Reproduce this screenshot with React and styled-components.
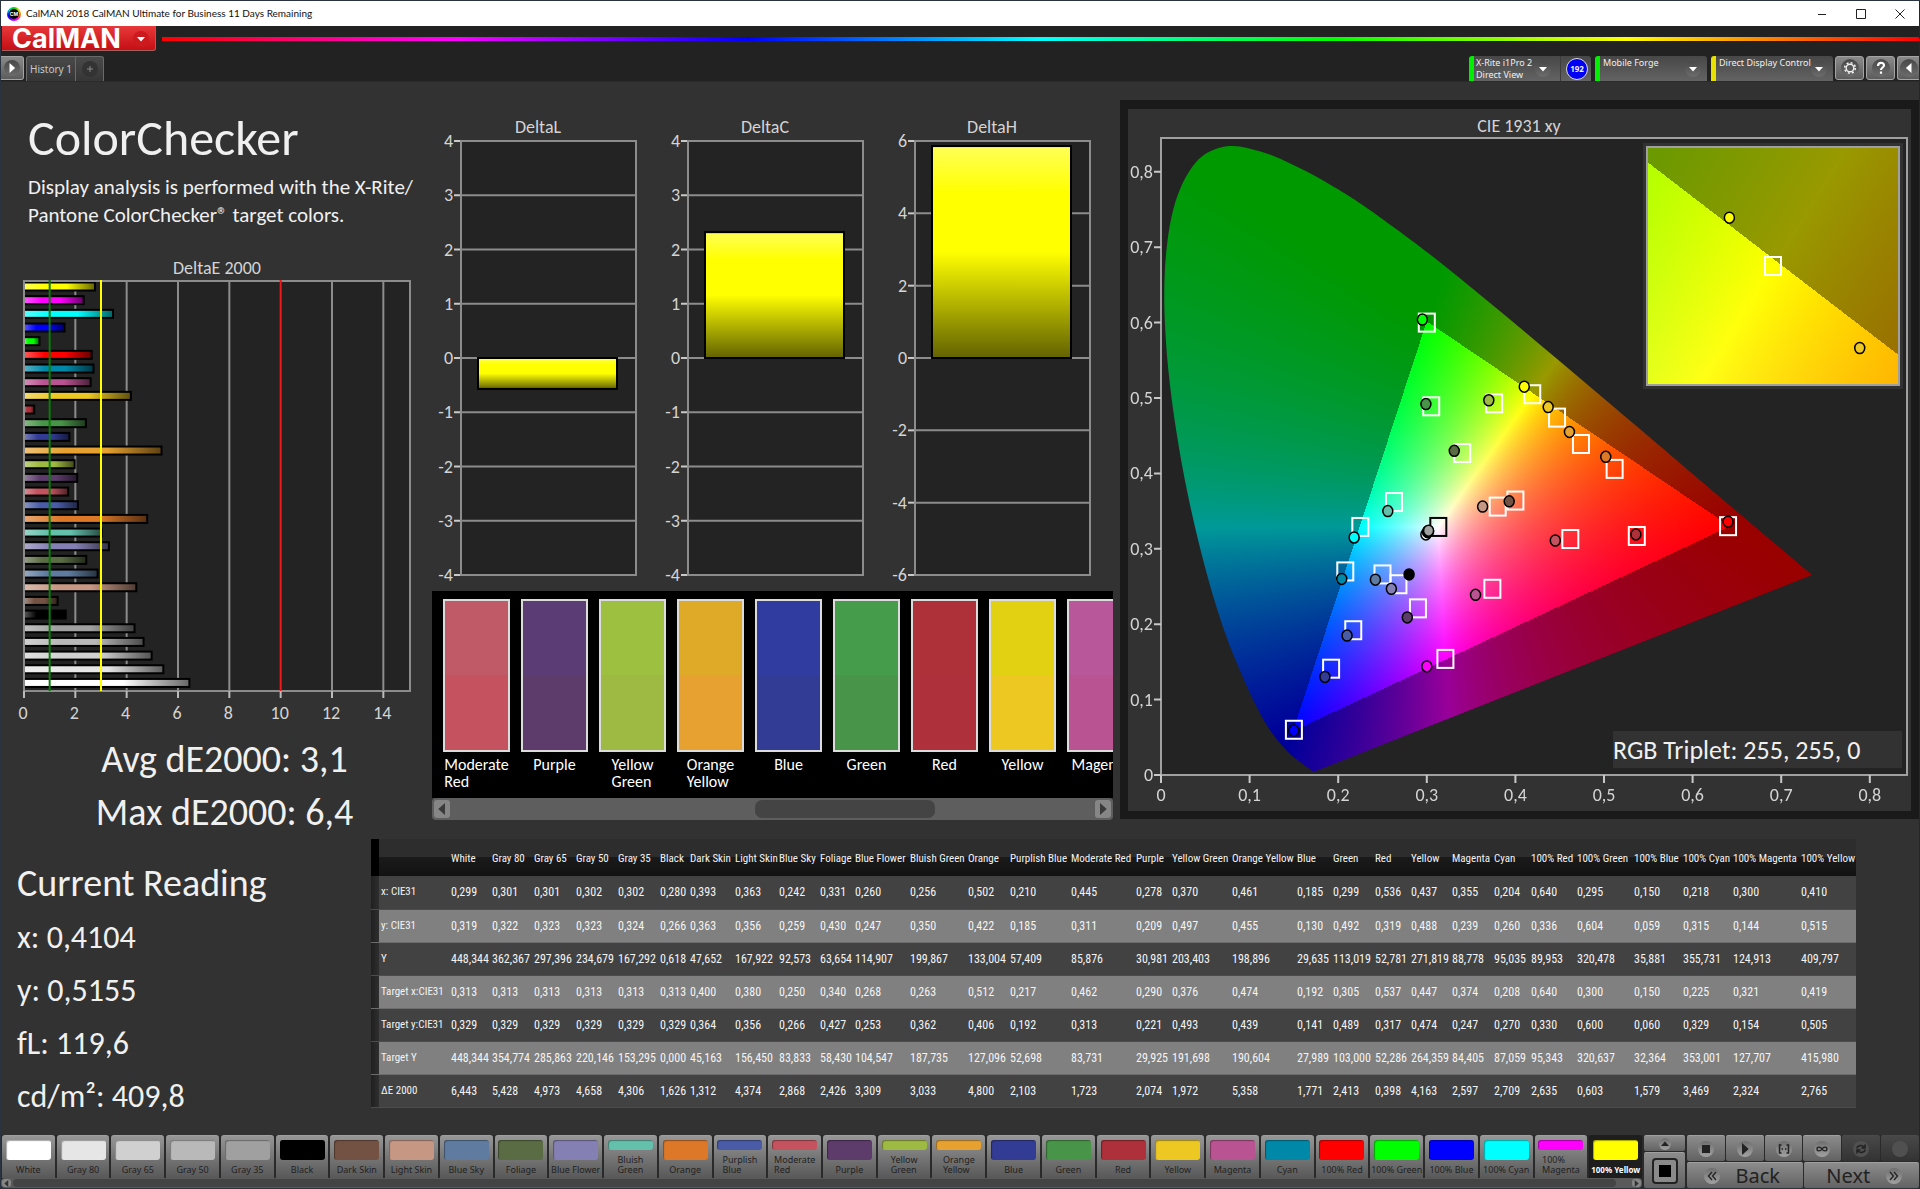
import React, { useEffect, useRef } from "react";
import styled, { createGlobalStyle, css } from "styled-components";

const UI = `"Noto Sans", "Open Sans", sans-serif`;
const BODY = `Carlito, Lato, sans-serif`;
const NARROW = `"Roboto Condensed", Roboto, sans-serif`;

/* ---------- data ---------- */

const PATCHES = [
  ["White", "#ffffff"], ["Gray 80", "#e6e6e6"], ["Gray 65", "#d0d0d0"], ["Gray 50", "#b9b9b9"],
  ["Gray 35", "#a0a0a0"], ["Black", "#000000"], ["Dark Skin", "#745243"], ["Light Skin", "#c69783"],
  ["Blue Sky", "#5f7ca0"], ["Foliage", "#5a6c43"], ["Blue Flower", "#8580b4"], ["Bluish Green", "#64bfab"],
  ["Orange", "#dc7828"], ["Purplish Blue", "#4a5ca8"], ["Moderate Red", "#c4535f"], ["Purple", "#5d3b6b"],
  ["Yellow Green", "#9fba42"], ["Orange Yellow", "#e6a130"], ["Blue", "#323c94"], ["Green", "#489448"],
  ["Red", "#ae303a"], ["Yellow", "#edc722"], ["Magenta", "#ba5391"], ["Cyan", "#0088a8"],
  ["100% Red", "#ff0000"], ["100% Green", "#00ff00"], ["100% Blue", "#0000ff"], ["100% Cyan", "#00ffff"],
  ["100% Magenta", "#ff00ff"], ["100% Yellow", "#ffff00"],
].map(([name, color]) => ({ name, color }));

const COLUMN_WIDTHS = [
  41, 42, 42, 42, 42, 30, 45, 44, 41, 35, 55, 58, 42, 61, 65,
  36, 60, 65, 36, 42, 36, 41, 42, 37, 46, 57, 49, 50, 68, 57,
];

const ROWS = [
  ["x: CIE31", "0,299 0,301 0,301 0,302 0,302 0,280 0,393 0,363 0,242 0,331 0,260 0,256 0,502 0,210 0,445 0,278 0,370 0,461 0,185 0,299 0,536 0,437 0,355 0,204 0,640 0,295 0,150 0,218 0,300 0,410"],
  ["y: CIE31", "0,319 0,322 0,323 0,323 0,324 0,266 0,363 0,356 0,259 0,430 0,247 0,350 0,422 0,185 0,311 0,209 0,497 0,455 0,130 0,492 0,319 0,488 0,239 0,260 0,336 0,604 0,059 0,315 0,144 0,515"],
  ["Y", "448,344 362,367 297,396 234,679 167,292 0,618 47,652 167,922 92,573 63,654 114,907 199,867 133,004 57,409 85,876 30,981 203,403 198,896 29,635 113,019 52,781 271,819 88,778 95,035 89,953 320,478 35,881 355,731 124,913 409,797"],
  ["Target x:CIE31", "0,313 0,313 0,313 0,313 0,313 0,313 0,400 0,380 0,250 0,340 0,268 0,263 0,512 0,217 0,462 0,290 0,376 0,474 0,192 0,305 0,537 0,447 0,374 0,208 0,640 0,300 0,150 0,225 0,321 0,419"],
  ["Target y:CIE31", "0,329 0,329 0,329 0,329 0,329 0,329 0,364 0,356 0,266 0,427 0,253 0,362 0,406 0,192 0,313 0,221 0,493 0,439 0,141 0,489 0,317 0,474 0,247 0,270 0,330 0,600 0,060 0,329 0,154 0,505"],
  ["Target Y", "448,344 354,774 285,863 220,146 153,295 0,000 45,163 156,450 83,833 58,430 104,547 187,735 127,096 52,698 83,731 29,925 191,698 190,604 27,989 103,000 52,286 264,359 84,405 87,059 95,343 320,637 32,364 353,001 127,707 415,980"],
  ["ΔE 2000", "6,443 5,428 4,973 4,658 4,306 1,626 1,312 4,374 2,868 2,426 3,309 3,033 4,800 2,103 1,723 2,074 1,972 5,358 1,771 2,413 0,398 4,163 2,597 2,709 2,635 0,603 1,579 3,469 2,324 2,765"],
].map(([label, values]) => ({ label, values: values.split(" ") }));

const num = (s) => parseFloat(s.replace(",", "."));
const series = (i) => ROWS[i].values.map(num);
const MX = series(0), MY = series(1), TX = series(3), TY = series(4), DE = series(6);

const COMPARISONS = [
  ["Moderate Red", "#c05a66", "#c4535f"], ["Purple", "#5c3c74", "#5d3b6b"], ["Yellow Green", "#9dc040", "#9fba42"],
  ["Orange Yellow", "#deaa28", "#e6a130"], ["Blue", "#303ca0", "#323c94"], ["Green", "#459c4b", "#489448"],
  ["Red", "#ae313a", "#ae303a"], ["Yellow", "#e2d012", "#edc722"], ["Magenta", "#b8589a", "#ba5391"],
];

/* ---------- shared styles ---------- */

const Global = createGlobalStyle`
  *, *::before, *::after { box-sizing: border-box; }
  body { margin: 0; background: #323232; }
  button, select { font: inherit; color: inherit; margin: 0; padding: 0; border: 0; background: none; }
  h1, h2, p, ul { margin: 0; padding: 0; font-weight: 400; list-style: none; }
`;

const Window = styled.div`
  min-height: 100vh;
  display: flex;
  flex-direction: column;
  background: #323232;
  border: 1px solid #2a3340;
  border-right-color: #23282e;
  color: #f0f0f0;
  font-family: ${BODY};
`;

/* ---------- title bar ---------- */

const TitleBar = styled.header`
  display: flex;
  align-items: center;
  gap: 5px;
  height: 25px;
  padding: 0 12px 0 6px;
  background: #fff;
  color: #111;
  font: 10px/25px Lato, sans-serif;
`;
const AppIcon = styled.span`
  width: 14px;
  height: 14px;
  border-radius: 50%;
  display: grid;
  place-items: center;
  background: conic-gradient(#0c0, #dd0, #f60, #f0f, #80f, #00f, #0cc, #0c0);
  &::before {
    content: "CM";
    width: 10px;
    height: 10px;
    border-radius: 50%;
    background: #000;
    color: #fff;
    font: bold 5px/10px Inter, sans-serif;
    text-align: center;
  }
`;
const Title = styled.span`flex: 1;`;
const WindowButtons = styled.div`
  display: flex;
  gap: 25px;
`;
const WindowButton = styled.button`
  width: 14px;
  height: 24px;
  display: grid;
  place-items: center;
`;

/* ---------- brand and tabs ---------- */

const BrandRow = styled.div`
  display: flex;
  align-items: center;
  gap: 6px;
  height: 30px;
  padding-left: 1px;
  background: #222;
`;
const Brand = styled.button`
  align-self: flex-start;
  width: 154px;
  height: 25px;
  display: flex;
  align-items: center;
  justify-content: space-between;
  padding: 2px 6px 0 10px;
  background: linear-gradient(#e8383a, #c40f14);
  border: 1px solid #a06060;
  border-width: 0 1px 1px 0;
  border-radius: 0 0 3px 0;
  color: #fff;
  font: bold 27px/24px Inter, sans-serif;
`;
const Spectrum = styled.div`
  flex: 1;
  height: 4px;
  margin-bottom: 4px;
  background: linear-gradient(90deg, #f00, #f0f, #00f, #0ff, #0f0, #ff0, #f00);
`;
const Dot = styled.span`
  flex: none;
  width: ${(p) => p.$size || 16}px;
  height: ${(p) => p.$size || 16}px;
  border-radius: 50%;
  display: grid;
  place-items: center;
  background: ${(p) => p.$bg || "linear-gradient(#484848, #6c6c6c)"};
`;
const TabBar = styled.div`
  display: flex;
  align-items: flex-end;
  justify-content: space-between;
  height: 26px;
  background: #222;
  border-bottom: 1px solid #2b2b2b;
  font: 9px/12px ${UI};
`;
const TabGroup = styled.div`
  display: flex;
  align-items: flex-start;
  height: 25px;
  gap: ${(p) => p.$gap || 0}px;
`;
const SquareButton = styled.button`
  width: ${(p) => p.$w || 29}px;
  height: 24px;
  display: grid;
  place-items: center;
  background: linear-gradient(#8a8a8a, #5c5c5c);
  border: 1px solid #a4a4a4;
  border-radius: ${(p) => p.$radius || "3px"};
  ${(p) => p.$open && css`border-${p.$open}: 0;`}
`;
const Tab = styled.button`
  width: ${(p) => p.$w}px;
  height: 25px;
  display: grid;
  place-items: center;
  margin-left: ${(p) => p.$ml || 0}px;
  background: linear-gradient(#4a4a4a, #363636);
  border: 1px solid #6a6a6a;
  border-bottom: 0;
  border-left-width: ${(p) => (p.$joined ? 0 : 1)}px;
  border-radius: ${(p) => (p.$joined ? "0 3px 0 0" : "3px 0 0 0")};
  color: #c8c8c8;
  font: 10px/24px ${UI};
`;
const Device = styled.div`
  position: relative;
  display: flex;
  align-items: center;
  width: ${(p) => p.$w}px;
  height: 25px;
  border-left: 5px solid ${(p) => p.$status};
  border-radius: 3px 3px 0 0;
  background: linear-gradient(#474747, #636363);
  color: #f0f0f0;
`;
const DeviceButton = styled.button`
  flex: 1;
  height: 25px;
  display: flex;
  align-items: center;
  justify-content: space-between;
  padding: 0 9px 0 2px;
  text-align: left;
  border-right: 1px solid #3c3c3c;
`;
const DeviceSelect = styled.select`
  flex: 1;
  height: 25px;
  padding: 1px 22px 12px 3px;
  appearance: none;
  outline: 0;
  option { color: #000; }
`;
const SelectArrow = styled(Dot)`
  position: absolute;
  right: 6px;
  top: 5px;
  pointer-events: none;
`;
const Counter = styled.span`
  width: 22px;
  height: 22px;
  margin: 0 3px 0 5px;
  border: 1px solid #ddd;
  border-radius: 50%;
  background: #0000f4;
  font: bold 8px/20px ${UI};
  text-align: center;
`;

/* ---------- main area ---------- */

const Upper = styled.main`
  display: grid;
  grid-template-columns: minmax(0, 431fr) minmax(0, 681fr) minmax(0, 806fr);
  align-items: start;
  min-height: 756px;
`;
const Intro = styled.section`
  padding-top: 21px;
`;
const Heading = styled.h1`
  padding-left: 27px;
  font-size: 50px;
  line-height: 70px;
`;
const Lead = styled.p`
  padding-left: 27px;
  margin-bottom: 25px;
  font-size: 21px;
  line-height: 28px;
`;
const Chart = styled.svg`
  display: block;
  width: 100%;
  height: auto;
  overflow: visible;
  font: 18px ${BODY};
  fill: #d4d4d4;
`;
const Averages = styled.div`
  padding-right: 64px;
  padding-left: 80px;
  font-size: 38px;
  line-height: 53px;
  text-align: center;
  white-space: nowrap;
`;
const Middle = styled.section`
  padding-top: 30px;
`;
const DeltaRow = styled.div`
  display: grid;
  grid-template-columns: repeat(3, 1fr);
`;
const Strip = styled.ul`
  display: flex;
  gap: 11px;
  height: 207px;
  margin-top: 7px;
  padding: 8px 0 0 11px;
  overflow: hidden;
  background: #000;
`;
const StripItem = styled.li`
  flex: none;
  width: 67px;
  display: flex;
  flex-direction: column;
  align-items: center;
  font-size: 16px;
  line-height: 17px;
  color: #fff;
`;
const StripSwatch = styled.span`
  width: 67px;
  height: 153px;
  margin-bottom: 4px;
  border: 2px solid #dcdcdc;
  background: linear-gradient(${(p) => p.$top} 50%, ${(p) => p.$bottom} 50%);
`;
const StripLabel = styled.span`
  width: ${(p) => (p.$two ? "min-content" : "auto")};
`;
const Track = styled.div`
  display: flex;
  align-items: stretch;
  justify-content: space-between;
  height: ${(p) => p.$h}px;
  padding: ${(p) => p.$pad}px;
  border-radius: 4px;
  background: ${(p) => p.$bg};
`;
const TrackButton = styled.button`
  width: ${(p) => p.$w}px;
  display: grid;
  place-items: center;
  border-radius: 3px;
  background: #868686;
`;
const ThumbLane = styled.div`
  flex: 1;
  padding-left: ${(p) => p.$before};
`;
const Thumb = styled.div`
  width: ${(p) => p.$w};
  height: 100%;
  border-radius: 7px;
  background: #444;
`;
const CiePanel = styled.section`
  margin: 18px 0 0 7px;
  padding: 9px 8px 8px;
  background: #1a1a1a;
`;
const CieInner = styled.div`
  background: #323232;
`;
const ColorField = styled.canvas`
  display: block;
  width: 100%;
  height: 100%;
`;

/* ---------- readings and table ---------- */

const Lower = styled.section`
  flex: 1;
  display: flex;
  align-items: flex-start;
  padding: 0 63px 0 16px;
`;
const Readings = styled.div`
  width: 354px;
  flex: none;
  padding-top: 16px;
`;
const ReadingTitle = styled.h2`
  font-size: 38px;
  line-height: 56px;
`;
const Reading = styled.p`
  font-size: 32px;
  line-height: 53px;
`;
const Table = styled.table`
  flex: 1;
  table-layout: fixed;
  border-collapse: collapse;
  width: 100%;
  font: 12px/20px ${NARROW};
  color: #f4f4f4;
  white-space: nowrap;
`;
const Th = styled.th`
  padding: 3px 0 0 2px;
  font-weight: 400;
  font-size: 11px;
  text-align: left;
`;
const HeadRow = styled.tr`
  height: 37px;
  background: linear-gradient(#2d2d2d 50%, #1a1a1a 50%, #121212);
`;
const BodyRow = styled.tr`
  height: 33px;
  background: ${(p) => (p.$light ? "#808080" : "#424242")};
  border-bottom: 1px solid ${(p) => (p.$light ? "#6c6c6c" : "#4c4c4c")};
`;
const RowTh = styled(Th)`
  padding-top: 0;
`;
const Td = styled.td`
  padding: 0 0 0 2px;
`;
const Gutter = styled.td`
  padding: 0;
  background: ${(p) => (p.$head ? "#000" : "linear-gradient(90deg, #202020, #2e2e2e)")};
`;

/* ---------- bottom bar ---------- */

const BottomBar = styled.footer`
  display: flex;
  gap: 2px;
  height: 53px;
  background: #2a2a2a;
  color: #222;
`;
const PatchArea = styled.div`
  flex: 1;
  min-width: 0;
`;
const PatchList = styled.div`
  display: flex;
  gap: 2px;
  padding-left: 1px;
  height: 43px;
`;
const PatchButton = styled.button`
  flex: 1;
  min-width: 0;
  display: flex;
  flex-direction: column;
  align-items: center;
  justify-content: space-between;
  padding: 4px 0 3px;
  border-top: 1px solid #a0a0a0;
  border-radius: 3px 3px 0 0;
  background: linear-gradient(#969696, #585858);
  font: 9px/10px ${UI};
  color: #222;
  text-align: left;
  ${(p) => p.$active && css`
    background: #1e1e1e;
    border-top-color: #1e1e1e;
    color: #fff;
    font-weight: 700;
    font-size: 8px;
  `}
`;
const PatchColor = styled.span`
  width: 45px;
  height: ${(p) => (p.$short ? 10 : 20)}px;
  border-radius: 3px;
  background: ${(p) => p.$color};
  box-shadow: inset 1px 1px 1px rgba(0, 0, 0, 0.35);
`;
const PatchLabel = styled.span`
  width: ${(p) => (p.$two ? "min-content" : "auto")};
  white-space: ${(p) => (p.$two ? "normal" : "nowrap")};
`;
const Levels = styled.div`
  width: 41px;
  display: flex;
  flex-direction: column;
  gap: 1px;
`;
const Panel = styled.button`
  flex: ${(p) => p.$flex || 1};
  min-width: 0;
  display: flex;
  align-items: center;
  justify-content: center;
  gap: 16px;
  padding: ${(p) => p.$pad || "0"};
  border-top: 1px solid ${(p) => (p.disabled ? "#4a4a4a" : "#a0a0a0")};
  border-radius: 2px;
  background: ${(p) => (p.disabled ? "linear-gradient(#484848, #333)" : "linear-gradient(#8c8c8c, #626262)")};
  color: #222;
  font: 20px/24px ${UI};
`;
const StopBox = styled.span`
  width: 26px;
  height: 26px;
  display: grid;
  place-items: center;
  border: 2px solid #222;
  border-radius: 4px;
  background: #8a8a8a;
`;
const Transport = styled.div`
  width: 232px;
  display: flex;
  flex-direction: column;
  gap: 1px;
`;
const TransportRow = styled.div`
  display: flex;
  gap: 1px;
  height: 26px;
`;

/* ---------- small drawings ---------- */

const Triangle = ({ dir = "down", size = 8, color = "#fff" }) => {
  const angle = { down: 0, left: 90, up: 180, right: 270 }[dir];
  return (
    <svg width={size} height={size} viewBox="0 0 8 8" aria-hidden="true">
      <path d="M0 2h8L4 6.5z" fill={color} transform={`rotate(${angle} 4 4)`} />
    </svg>
  );
};

const Stroke = ({ d, size = 12, w = 1.5, color = "#222" }) => (
  <svg width={size} height={size} viewBox="0 0 12 12" aria-hidden="true">
    <path d={d} fill="none" stroke={color} strokeWidth={w} />
  </svg>
);

const Gear = () => (
  <svg width="14" height="14" viewBox="0 0 14 14" aria-hidden="true" fill="none" stroke="#eee">
    <circle cx="7" cy="7" r="3.8" strokeWidth="1.4" />
    <circle cx="7" cy="7" r="5.3" strokeWidth="1.6" strokeDasharray="2 2.16" />
  </svg>
);

/* ---------- charts ---------- */

const GRID = "#8c8c8c";

function shade(hex, k) {
  const n = parseInt(hex.slice(1), 16);
  const mix = (v) => Math.round(k > 0 ? v + (255 - v) * k : v * (1 + k));
  return `rgb(${mix(n >> 16)},${mix((n >> 8) & 255)},${mix(n & 255)})`;
}

function DeltaEChart() {
  const unit = 385 / 15;
  const x = (v) => 23 + v * unit;
  const bars = PATCHES.map((p, i) => ({ ...p, value: DE[i], i })).reverse();
  return (
    <Chart viewBox="0 0 431 479" role="img" aria-label="DeltaE 2000">
      <defs>
        {bars.map((b) => (
          <linearGradient id={`bar${b.i}`} key={b.i}>
            <stop offset="0" stopColor={shade(b.color, 0.35)} />
            <stop offset="0.3" stopColor={b.color} />
            <stop offset="0.6" stopColor={b.color} />
            <stop offset="1" stopColor={shade(b.color, -0.6)} />
          </linearGradient>
        ))}
      </defs>
      <text x="216" y="20" textAnchor="middle">DeltaE 2000</text>
      <rect x="23" y="27" width="386" height="410" fill="#232323" />
      {[2, 4, 6, 8, 12, 14].map((v) => (
        <path key={v} d={`M${x(v)} 27V437`} stroke={GRID} strokeWidth="2" />
      ))}
      {bars.map((b, n) => (
        <rect key={b.i} x="23" y={28.5 + n * 13.67} width={b.value * unit} height="8"
          fill={`url(#bar${b.i})`} stroke="#000" strokeWidth="2" />
      ))}
      <rect x="23" y="27" width="386" height="410" fill="none" stroke={GRID} strokeWidth="2" />
      <path d={`M${x(1)} 26V437`} stroke="#0b7a0b" strokeWidth="2" />
      <path d={`M${x(3)} 26V437`} stroke="#ff0" strokeWidth="2" />
      <path d={`M${x(10)} 26V437`} stroke="#f01818" strokeWidth="2" />
      {[0, 2, 4, 6, 8, 10, 12, 14].map((v) => (
        <g key={v}>
          <path d={`M${x(v)} 437v7`} stroke="#bbb" strokeWidth="2" />
          <text x={x(v) - 1} y="465" textAnchor="middle">{v}</text>
        </g>
      ))}
    </Chart>
  );
}

function DeltaChart({ title, max, step, value }) {
  const mid = 246;
  const unit = 217 / max;
  const ticks = [];
  for (let v = max; v >= -max; v -= step) ticks.push(v);
  const h = Math.abs(value) * unit;
  return (
    <Chart viewBox="0 0 227 472" role="img" aria-label={title}>
      <defs>
        <linearGradient id={`${title}-fill`} x2="0" y2="1">
          <stop offset="0" stopColor="#ffff58" />
          <stop offset="0.22" stopColor="#ffff00" />
          <stop offset="0.5" stopColor="#ffff00" />
          <stop offset="1" stopColor="#626200" />
        </linearGradient>
      </defs>
      <text x="106" y="21" textAnchor="middle">{title}</text>
      <rect x="29" y="29" width="175" height="434" fill="#232323" />
      {ticks.map((v) => (
        <g key={v}>
          <path d={`M29 ${mid - v * unit}H204`} stroke={GRID} strokeWidth="2" />
          <path d={`M22 ${mid - v * unit}h7`} stroke="#c8c8c8" strokeWidth="2" />
          <text x="21" y={mid - v * unit + 6} textAnchor="end">{v}</text>
        </g>
      ))}
      <rect x="29" y="29" width="175" height="434" fill="none" stroke={GRID} strokeWidth="2" />
      <rect x="46" y={value > 0 ? mid - h : mid} width="139" height={h}
        fill={`url(#${title}-fill)`} stroke="#000" strokeWidth="2" />
    </Chart>
  );
}

const LOCUS = [
  [0.1741, 0.005], [0.1714, 0.0051], [0.1689, 0.0069], [0.1644, 0.0109], [0.1566, 0.0177], [0.144, 0.0297],
  [0.1241, 0.0578], [0.1096, 0.0868], [0.0913, 0.1327], [0.0687, 0.2007], [0.0454, 0.295], [0.0235, 0.4127],
  [0.0082, 0.5384], [0.0039, 0.6548], [0.0139, 0.7502], [0.0389, 0.812], [0.0743, 0.8338], [0.1142, 0.8262],
  [0.1547, 0.8059], [0.1929, 0.7816], [0.2296, 0.7543], [0.3016, 0.6923], [0.3731, 0.6245], [0.4441, 0.5547],
  [0.5125, 0.4866], [0.5752, 0.4242], [0.627, 0.3725], [0.6658, 0.334], [0.6915, 0.3083], [0.719, 0.2809],
  [0.7347, 0.2653],
];

// Linear Rec.709 primaries, scaled so the largest channel is full; dimmed outside the gamut.
function colorAt(x, y) {
  const X = x, Y = y, Z = 1 - x - y;
  const rgb = [
    3.2406 * X - 1.5372 * Y - 0.4986 * Z,
    -0.9689 * X + 1.8758 * Y + 0.0415 * Z,
    0.0557 * X - 0.204 * Y + 1.057 * Z,
  ];
  const inside = Math.min(...rgb) >= -0.002;
  const k = (inside ? 255 : 153) / Math.max(...rgb);
  return rgb.map((v) => Math.max(0, v) * k);
}

function Field({ width, height, x0, y0, kx, ky, clip }) {
  const ref = useRef(null);
  useEffect(() => {
    const ctx = ref.current.getContext("2d");
    const img = ctx.createImageData(width, height);
    for (let j = 0; j < height; j++) {
      for (let i = 0; i < width; i++) {
        const [r, g, b] = colorAt(x0 + (i + 0.5) / kx, y0 + (height - j - 0.5) / ky);
        const o = (j * width + i) * 4;
        img.data[o] = r;
        img.data[o + 1] = g;
        img.data[o + 2] = b;
        img.data[o + 3] = 255;
      }
    }
    ctx.putImageData(img, 0, 0);
    if (clip) {
      const pts = LOCUS.map(([x, y]) => [(x - x0) * kx, height - (y - y0) * ky]);
      ctx.globalCompositeOperation = "destination-in";
      ctx.beginPath();
      ctx.moveTo(...pts[0]);
      for (let i = 0; i < pts.length - 1; i++) {
        const p0 = pts[Math.max(0, i - 1)], p1 = pts[i], p2 = pts[i + 1], p3 = pts[Math.min(pts.length - 1, i + 2)];
        ctx.bezierCurveTo(
          p1[0] + (p2[0] - p0[0]) / 6, p1[1] + (p2[1] - p0[1]) / 6,
          p2[0] - (p3[0] - p1[0]) / 6, p2[1] - (p3[1] - p1[1]) / 6, p2[0], p2[1]
        );
      }
      ctx.closePath();
      ctx.fill();
      ctx.globalCompositeOperation = "source-over";
    }
  }, [width, height, x0, y0, kx, ky, clip]);
  return <ColorField ref={ref} width={width} height={height} />;
}

const Target = ({ x, y, color = "#fff" }) => (
  <rect x={x - 8} y={y - 9} width="16" height="18" fill="none" stroke={color} strokeWidth="2" />
);
const Sample = ({ x, y, color }) => (
  <ellipse cx={x} cy={y} rx="5" ry="5.5" fill={color} stroke="#000" strokeWidth="1.5" />
);

function CieChart() {
  const L = 33, T = 29, W = 746, H = 637;
  const B = T + H;
  const px = (x) => L + x * 886;
  const py = (y) => B - y * 754;
  const ticks = [0, 1, 2, 3, 4, 5, 6, 7, 8];
  const label = (n) => (n ? `0,${n}` : "0");
  const inset = { x: 519, y: 38, w: 252, h: 238, kx: 4900, ky: 4740, cx: 0.4193, cy: 0.5053 };
  const ix = (x) => inset.x + inset.w / 2 + (x - inset.cx) * inset.kx;
  const iy = (y) => inset.y + inset.h / 2 - (y - inset.cy) * inset.ky;
  return (
    <Chart viewBox="0 0 783 702" role="img" aria-label="CIE 1931 xy">
      <text x="391" y="23" textAnchor="middle">CIE 1931 xy</text>
      <rect x={L} y={T} width={W} height={H} fill="#232323" />
      <foreignObject x={L} y={T} width={W} height={H}>
        <Field width={W} height={H} x0={0} y0={0} kx={886} ky={754} clip />
      </foreignObject>
      <rect x={L} y={T} width={W} height={H} fill="none" stroke="#a0a0a0" strokeWidth="2" />
      {ticks.map((n) => (
        <g key={n}>
          <path d={`M${px(n / 10)} ${B}v8M${L} ${py(n / 10)}h-7`} stroke="#c8c8c8" strokeWidth="2" />
          <text x={px(n / 10)} y={B + 26} textAnchor="middle">{label(n)}</text>
          <text x={L - 8} y={py(n / 10) + 6} textAnchor="end">{label(n)}</text>
        </g>
      ))}
      {TX.map((x, i) => i > 4 && <Target key={i} x={px(x)} y={py(TY[i])} color={i === 5 ? "#000" : "#fff"} />)}
      {MX.map((x, i) => <Sample key={i} x={px(x)} y={py(MY[i])} color={PATCHES[i].color} />)}

      <rect x={inset.x - 4} y={inset.y - 4} width={inset.w + 8} height={inset.h + 8} fill="#323232" />
      <foreignObject x={inset.x} y={inset.y} width={inset.w} height={inset.h}>
        <Field width={inset.w} height={inset.h} kx={inset.kx} ky={inset.ky}
          x0={inset.cx - inset.w / 2 / inset.kx} y0={inset.cy - inset.h / 2 / inset.ky} />
      </foreignObject>
      <rect x={inset.x} y={inset.y} width={inset.w} height={inset.h} fill="none" stroke="#a0a0a0" strokeWidth="2" />
      <Target x={ix(0.4193)} y={iy(0.5053)} />
      <Sample x={ix(0.4104)} y={iy(0.5155)} color="#ffff00" />
      <Sample x={ix(0.437)} y={iy(0.488)} color="#edc722" />

      <rect x="485" y="622" width="289" height="37" fill="#323232" />
      <text x="485" y="650" fontSize="26" fill="#f0f0f0">RGB Triplet: 255, 255, 0</text>
    </Chart>
  );
}

/* ---------- page ---------- */

const SWATCH_TWO_LINES = new Set(["Bluish Green", "Purplish Blue", "Moderate Red", "Yellow Green", "Orange Yellow", "100% Magenta"]);

function DeviceMenu({ name, width, status }) {
  return (
    <Device $w={width} $status={status}>
      <DeviceSelect aria-label={name}><option>{name}</option></DeviceSelect>
      <SelectArrow><Triangle /></SelectArrow>
    </Device>
  );
}

const BUTTON_DOT = "linear-gradient(#6e6e6e, #a2a2a2)";
const OFF_DOT = "#505050";

export default function App() {
  return (
    <Window>
      <Global />
      <TitleBar>
        <AppIcon />
        <Title>CalMAN 2018 CalMAN Ultimate for Business 11 Days Remaining</Title>
        <WindowButtons>
          <WindowButton aria-label="Minimize"><Stroke d="M2 6.5h8" w={1} /></WindowButton>
          <WindowButton aria-label="Maximize"><Stroke d="M1.500 1.500h9v9h-9z" w={1} /></WindowButton>
          <WindowButton aria-label="Close"><Stroke d="M1.500 1.500l9 9m0-9l-9 9" w={1} /></WindowButton>
        </WindowButtons>
      </TitleBar>

      <BrandRow>
        <Brand aria-label="CalMAN menu">
          CalMAN
          <Dot $bg="#cc1a1e"><Triangle /></Dot>
        </Brand>
        <Spectrum />
      </BrandRow>

      <TabBar>
        <TabGroup>
          <SquareButton $w={23} $radius="0 3px 3px 0" $open="left" aria-label="Show workflow">
            <Dot><Triangle dir="right" size={10} /></Dot>
          </SquareButton>
          <Tab $w={50} $ml={2}>History 1</Tab>
          <Tab $w={28} $joined aria-label="Add tab">
            <Dot $bg="#333"><Stroke d="M6 3v6M3 6h6" w={1} color="#888" /></Dot>
          </Tab>
        </TabGroup>
        <TabGroup $gap={2}>
          <Device $w={122} $status="#0e0">
            <DeviceButton aria-haspopup="menu">
              <span>X-Rite i1Pro 2<br />Direct View</span>
              <Dot><Triangle /></Dot>
            </DeviceButton>
            <Counter>192</Counter>
          </Device>
          <span />
          <DeviceMenu name="Mobile Forge" width={112} status="#0e0" />
          <span />
          <DeviceMenu name="Direct Display Control" width={122} status="#e8e000" />
          <SquareButton aria-label="Settings"><Dot $size={18}><Gear /></Dot></SquareButton>
          <SquareButton aria-label="Help">
            <Dot $size={18}>
              <svg width="12" height="14" viewBox="0 0 12 14" aria-hidden="true" fill="none" stroke="#fff" strokeWidth="2.200">
                <path d="M3 5c0-4 6-4 6-.8C9 6.500 6 6.500 6 9M6 10.500v2.200" />
              </svg>
            </Dot>
          </SquareButton>
          <SquareButton $w={22} $radius="3px 0 0 3px" $open="right" aria-label="Collapse">
            <Dot $size={18}><Triangle dir="left" size={10} /></Dot>
          </SquareButton>
        </TabGroup>
      </TabBar>

      <Upper>
        <Intro>
          <Heading>ColorChecker</Heading>
          <Lead>Display analysis is performed with the X-Rite/<br />Pantone ColorChecker® target colors.</Lead>
          <DeltaEChart />
          <Averages>
            <p>Avg dE2000: 3,1</p>
            <p>Max dE2000: 6,4</p>
          </Averages>
        </Intro>

        <Middle>
          <DeltaRow>
            <DeltaChart title="DeltaL" max={4} step={1} value={-0.57} />
            <DeltaChart title="DeltaC" max={4} step={1} value={2.32} />
            <DeltaChart title="DeltaH" max={6} step={2} value={5.86} />
          </DeltaRow>
          <Strip>
            {COMPARISONS.map(([name, top, bottom]) => (
              <StripItem key={name}>
                <StripSwatch $top={top} $bottom={bottom} />
                <StripLabel $two={name.includes(" ")}>{name}</StripLabel>
              </StripItem>
            ))}
          </Strip>
          <Track $h={22} $pad={2} $bg="#5e5e5e">
            <TrackButton $w={16} aria-label="Scroll left"><Triangle dir="left" size={12} color="#3a3a3a" /></TrackButton>
            <ThumbLane $before="45%"><Thumb $w="53%" /></ThumbLane>
            <TrackButton $w={16} aria-label="Scroll right"><Triangle dir="right" size={12} color="#3a3a3a" /></TrackButton>
          </Track>
        </Middle>

        <CiePanel>
          <CieInner><CieChart /></CieInner>
        </CiePanel>
      </Upper>

      <Lower>
        <Readings>
          <ReadingTitle>Current Reading</ReadingTitle>
          <Reading>x: 0,4104</Reading>
          <Reading>y: 0,5155</Reading>
          <Reading>fL: 119,6</Reading>
          <Reading>cd/m²: 409,8</Reading>
        </Readings>
        <Table>
          <colgroup>
            <col style={{ width: 8 }} />
            <col style={{ width: 70 }} />
            {COLUMN_WIDTHS.map((w, i) => <col key={i} style={{ width: w }} />)}
          </colgroup>
          <thead>
            <HeadRow>
              <Gutter $head />
              <Td />
              {PATCHES.map((p) => <Th scope="col" key={p.name}>{p.name}</Th>)}
            </HeadRow>
          </thead>
          <tbody>
            {ROWS.map((r, n) => (
              <BodyRow key={r.label} $light={n % 2 === 1}>
                <Gutter />
                <RowTh scope="row">{r.label}</RowTh>
                {r.values.map((v, i) => <Td key={i}>{v}</Td>)}
              </BodyRow>
            ))}
          </tbody>
        </Table>
      </Lower>

      <BottomBar>
        <PatchArea>
          <PatchList>
            {PATCHES.map((p, i) => {
              const two = SWATCH_TWO_LINES.has(p.name);
              return (
                <PatchButton key={p.name} $active={i === PATCHES.length - 1}>
                  <PatchColor $color={p.color} $short={two} />
                  <PatchLabel $two={two}>{p.name}</PatchLabel>
                </PatchButton>
              );
            })}
          </PatchList>
          <Track $h={10} $pad={1} $bg="#5a5a5a">
            <TrackButton $w={9} aria-label="Scroll left"><Triangle dir="left" size={7} color="#333" /></TrackButton>
            <ThumbLane $before="2px"><Thumb $w="99%" /></ThumbLane>
            <TrackButton $w={9} aria-label="Scroll right"><Triangle dir="right" size={7} color="#333" /></TrackButton>
          </Track>
        </PatchArea>
        <Levels>
          <Panel $flex={16} aria-label="Raise"><Dot $size={12} $bg={BUTTON_DOT}><Triangle dir="up" size={8} color="#222" /></Dot></Panel>
          <Panel $flex={36} aria-label="Pattern window">
            <StopBox>
              <svg width="12" height="12" aria-hidden="true"><rect width="12" height="12" fill="#000" /></svg>
            </StopBox>
          </Panel>
        </Levels>
        <Transport>
          <TransportRow>
            <Panel aria-label="Stop"><Dot $bg={BUTTON_DOT}><svg width="8" height="8" aria-hidden="true"><rect width="8" height="8" fill="#222" /></svg></Dot></Panel>
            <Panel aria-label="Play"><Dot $bg={BUTTON_DOT}><Triangle dir="right" size={12} color="#222" /></Dot></Panel>
            <Panel aria-label="Read series"><Dot $bg={BUTTON_DOT}><Stroke d="M3.500 2H1.500v8h2M8.500 2h2v8h-2M3.500 6h1.500M7 6h1.500" /></Dot></Panel>
            <Panel aria-label="Read continuously"><Dot $bg={BUTTON_DOT}><Stroke d="M6 6C4.500 3.500 1 3.500 1 6s3.500 2.500 5 0s5-2.500 5 0s-3.500 2.500-5 0" w={1.3} /></Dot></Panel>
            <Panel disabled aria-label="Repeat"><Dot $bg={OFF_DOT}><Stroke d="M2 5.500C2 2.500 6.500 1.500 9 4M10 1.500V5H6.500M10 6.500c0 3-4.500 4-7 1.500M2 10.500V7h3.500" /></Dot></Panel>
            <Panel disabled aria-label="Record"><Dot $bg={OFF_DOT} /></Panel>
          </TransportRow>
          <TransportRow>
            <Panel $pad="0 6px 0 0"><Dot $bg={BUTTON_DOT}><Stroke d="M6 2L2.500 6L6 10M10 2L6.500 6L10 10" w={1.3} /></Dot>Back</Panel>
            <Panel $pad="0 0 0 6px">Next<Dot $bg={BUTTON_DOT}><Stroke d="M2 2L5.500 6L2 10M6 2L9.500 6L6 10" w={1.3} /></Dot></Panel>
          </TransportRow>
        </Transport>
      </BottomBar>
    </Window>
  );
}
